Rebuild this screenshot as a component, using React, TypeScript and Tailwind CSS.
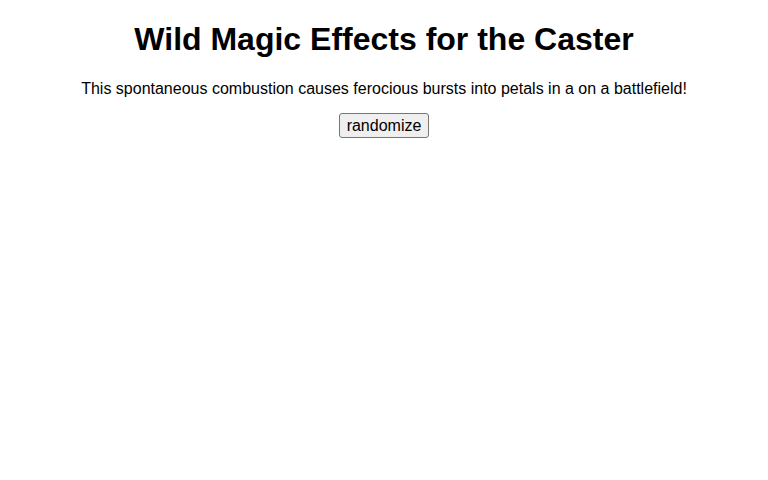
import { useState } from "react"

const effects = [
  "This spontaneous combustion causes ferocious bursts into petals in a on a battlefield!",
  "A sudden gust of wind scatters glittering sparks across the caster's path!",
  "The caster's shadow detaches and dances wildly around the nearest enemy!",
]

const App = () => {
  const [index, setIndex] = useState(0)

  return (
    <div className="w-full text-center text-black font-['Liberation_Sans',Arial,sans-serif]">
      <h1 className="pt-[21px] text-[32px] leading-[37px] font-bold">Wild Magic Effects for the Caster</h1>
      <p className="mt-[22px] text-[16px] leading-[18px]">{effects[index]}</p>
      <div className="mt-[15px]">
        <button
          onClick={() => setIndex((index + 1) % effects.length)}
          className="h-[25px] px-[7px] text-[16px] leading-[18px] bg-[#efefef] border border-[#767676] rounded-[3px] hover:bg-[#e5e5e5]"
        >
          randomize
        </button>
      </div>
    </div>
  )
}

export default App
